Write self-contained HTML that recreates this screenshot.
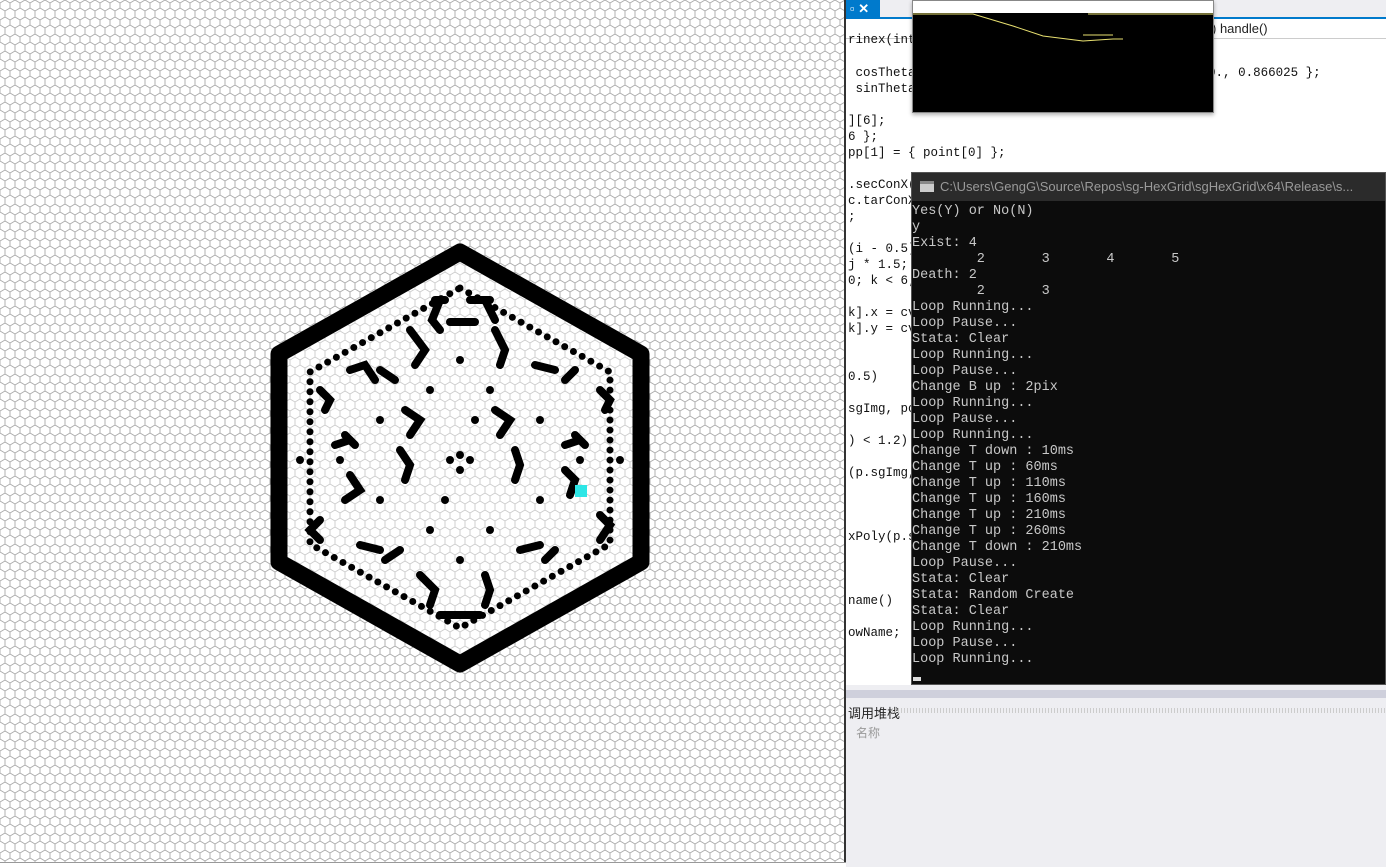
<!DOCTYPE html>
<html><head><meta charset="utf-8"><style>
*{margin:0;padding:0;box-sizing:border-box}
body{width:1386px;height:867px;overflow:hidden;background:#fff;position:relative;font-family:"Liberation Mono",monospace}
.abs{position:absolute}
.code{position:absolute;left:848px;font-family:"Liberation Mono",monospace;font-size:12.5px;color:#111;white-space:pre;line-height:16px}
.con{position:absolute;left:912px;top:204px;font-family:"Liberation Mono",monospace;font-size:13.5px;color:#c8c8c8;white-space:pre;line-height:16px}
</style></head><body>
<svg class="abs" style="left:0;top:0" width="846" height="867">
<defs>
<pattern id="hx" width="10" height="17" patternUnits="userSpaceOnUse">
<path d="M0 3 L5 0 L10 3 M5 0 V-3 M0 3 V8 M10 3 V8 M0 8 L5 11 L10 8 M5 11 V17" stroke="#a8a8a8" stroke-width="0.9" fill="none"/>
</pattern>
</defs>
<rect width="846" height="867" fill="#fff"/>
<rect width="846" height="862" fill="url(#hx)"/>
<polygon points="460,252 641,354 641,562 460,664 279,562 279,354" fill="#fff" fill-opacity="0.4" stroke="#000" stroke-width="17" stroke-linejoin="round"/>
<polygon points="460,288 610,372 610,544 460,628 310,544 310,372" fill="none" stroke="#000" stroke-width="7" stroke-dasharray="0 10" stroke-linecap="round"/>
<g stroke="#000" stroke-width="8" stroke-linecap="round" fill="none">
<path d="M435 300 L445 300 M440 300 L432 320 L440 330" />
<path d="M470 300 L490 300 M485 300 L495 320"/>
<path d="M450 322 L475 322"/>
<path d="M410 330 L425 350 L415 365"/>
<path d="M495 330 L505 350 L500 365"/>
<path d="M350 370 L365 365 L375 380 M380 370 L395 380"/>
<path d="M535 365 L555 370 M565 380 L575 370"/>
<path d="M320 390 L330 400 L325 410"/>
<path d="M600 390 L610 400 L605 410"/>
<path d="M345 435 L355 445 M335 445 L350 440"/>
<path d="M405 410 L420 420 L410 435"/>
<path d="M495 410 L510 420 L500 435"/>
<path d="M575 435 L585 445 M565 445 L580 440"/>
<path d="M400 450 L410 465 L405 480"/>
<path d="M515 450 L520 465 L515 480"/>
<path d="M350 475 L360 490 L345 500"/>
<path d="M565 470 L575 480 L570 495"/>
<path d="M320 520 L310 530 L320 540"/>
<path d="M600 515 L610 525 L600 540"/>
<path d="M360 545 L380 550 M385 560 L400 550"/>
<path d="M520 550 L540 545 M545 560 L555 550"/>
<path d="M420 575 L435 590 L430 605"/>
<path d="M485 575 L490 590 L485 605"/>
<path d="M440 615 L480 615"/>
</g>
<g fill="#000">
<circle cx="460" cy="455" r="4"/><circle cx="450" cy="460" r="4"/><circle cx="470" cy="460" r="4"/><circle cx="460" cy="470" r="4"/>
<circle cx="380" cy="420" r="4"/><circle cx="540" cy="420" r="4"/><circle cx="380" cy="500" r="4"/><circle cx="540" cy="500" r="4"/>
<circle cx="430" cy="390" r="4"/><circle cx="490" cy="390" r="4"/><circle cx="430" cy="530" r="4"/><circle cx="490" cy="530" r="4"/>
<circle cx="460" cy="360" r="4"/><circle cx="460" cy="560" r="4"/><circle cx="340" cy="460" r="4"/><circle cx="580" cy="460" r="4"/>
<circle cx="300" cy="460" r="4"/><circle cx="620" cy="460" r="4"/><circle cx="445" cy="500" r="4"/><circle cx="475" cy="420" r="4"/>
</g>
<rect x="575" y="485" width="12" height="12" fill="#2ee6e6"/>
<rect x="844" y="0" width="2" height="867" fill="#333"/>
<rect x="0" y="862" width="846" height="5" fill="#fff"/>
<rect x="0" y="862" width="846" height="1" fill="#999"/>
</svg>
<div class="abs" style="left:846px;top:0;width:540px;height:18px;background:#eeeef2"></div>
<div class="abs" style="left:846px;top:0;width:34px;height:18px;background:#007acc;color:#fff;font:bold 13px 'Liberation Sans',sans-serif;padding:1px 0 0 4px">▫ ✕</div>
<div class="abs" style="left:846px;top:17px;width:540px;height:2px;background:#007acc"></div>
<div class="abs" style="left:846px;top:19px;width:540px;height:20px;background:#fff;border-bottom:1px solid #ccc"></div>
<div class="abs" style="left:1212px;top:21px;font:13px 'Liberation Sans',sans-serif;color:#222">) handle()</div>
<div class="code" style="top:32px">rinex(int</div>
<div class="code" style="top:65px"> cosTheta                                       0., 0.866025 };</div>
<div class="code" style="top:81px"> sinTheta</div>
<div class="code" style="top:113px">][6];
6 };
pp[1] = { point[0] };</div>
<div class="code" style="top:177px">.secConX(
c.tarConX
;</div>
<div class="code" style="top:241px">(i - 0.5)
j * 1.5;
0; k &lt; 6;</div>
<div class="code" style="top:305px">k].x = cv
k].y = cv</div>
<div class="code" style="top:369px">0.5)</div>
<div class="code" style="top:401px">sgImg, po</div>
<div class="code" style="top:433px">) &lt; 1.2)</div>
<div class="code" style="top:465px">(p.sgImg,</div>
<div class="code" style="top:529px">xPoly(p.s</div>
<div class="code" style="top:593px">name()</div>
<div class="code" style="top:625px">owName;</div>
<div class="abs" style="left:912px;top:0;width:302px;height:113px;background:#000;border:1px solid #888;box-shadow:0 2px 4px rgba(0,0,0,.3)">
<div style="height:12px;background:#fff"></div>
<svg width="300" height="40" style="position:absolute;left:0;top:10px"><polyline points="0,3 60,3 100,15 130,25 170,30 200,28 210,28" stroke="#e8e070" fill="none"/><line x1="170" y1="24" x2="200" y2="24" stroke="#e8e070"/><line x1="175" y1="3" x2="300" y2="3" stroke="#e8e070"/></svg>
</div>
<div class="abs" style="left:911px;top:172px;width:475px;height:513px;background:#0c0c0c;border:1px solid #555">
<div style="height:28px;background:#2b2b2b;color:#9a9a9a;font:13px 'Liberation Sans',sans-serif;padding:6px 0 0 28px;position:relative;white-space:nowrap;overflow:hidden">C:\Users\GengG\Source\Repos\sg-HexGrid\sgHexGrid\x64\Release\s...<span style="position:absolute;left:8px;top:8px;width:14px;height:11px;background:#ccc;border-top:3px solid #888"></span></div>
</div>
<div class="con">Yes(Y) or No(N)
y
Exist: 4
        2       3       4       5
Death: 2
        2       3
Loop Running...
Loop Pause...
Stata: Clear
Loop Running...
Loop Pause...
Change B up : 2pix
Loop Running...
Loop Pause...
Loop Running...
Change T down : 10ms
Change T up : 60ms
Change T up : 110ms
Change T up : 160ms
Change T up : 210ms
Change T up : 260ms
Change T down : 210ms
Loop Pause...
Stata: Clear
Stata: Random Create
Stata: Clear
Loop Running...
Loop Pause...
Loop Running...</div>
<div class="abs" style="left:913px;top:677px;width:8px;height:4px;background:#ddd"></div>
<div class="abs" style="left:846px;top:685px;width:540px;height:182px;background:#eeeef2"></div>
<div class="abs" style="left:846px;top:690px;width:540px;height:8px;background:#cfd0dc"></div>
<div class="abs" style="left:848px;top:703px;font:13px 'Liberation Sans','Noto Sans CJK SC',sans-serif;color:#222">调用堆栈</div>
<div class="abs" style="left:892px;top:708px;width:494px;height:5px;background:repeating-linear-gradient(90deg,#ccc 0 1px,transparent 1px 3px)"></div>
<div class="abs" style="left:856px;top:724px;font:12px 'Liberation Sans','Noto Sans CJK SC',sans-serif;color:#999">名称</div>
</body></html>
